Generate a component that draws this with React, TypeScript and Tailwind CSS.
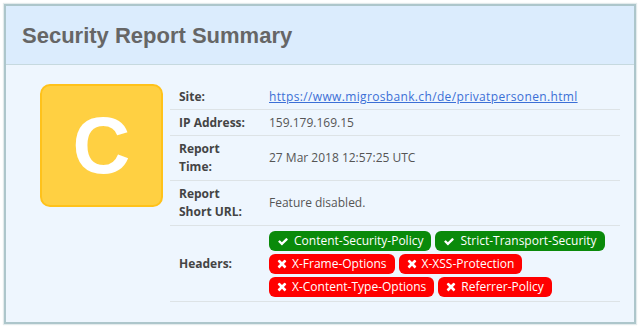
import React from "react";

const Check = () => (
  <svg width="12" height="11" viewBox="0 0 1792 1792" className="shrink-0" fill="currentColor">
    <path d="M1671 566q0 40-28 68l-724 724-136 136q-28 28-68 28t-68-28l-136-136-362-362q-28-28-28-68t28-68l136-136q28-28 68-28t68 28l294 295 656-657q28-28 68-28t68 28l136 136q28 28 28 68z" />
  </svg>
);

const Cross = () => (
  <svg width="10" height="10" viewBox="0 0 1408 1408" className="shrink-0" fill="currentColor">
    <path d="M1298 1054q0 40-28 68l-136 136q-28 28-68 28t-68-28l-294-294-294 294q-28 28-68 28t-68-28l-136-136q-28-28-28-68t28-68l294-294-294-294q-28-28-28-68t28-68l136-136q28-28 68-28t68 28l294 294 294-294q28-28 68-28t68 28l136 136q28 28 28 68t-28 68l-294 294 294 294q28 28 28 68z" />
  </svg>
);

const Pill = ({ ok, label }: { ok: boolean; label: string }) => (
  <span
    className={`inline-flex items-center gap-[5px] h-[20px] rounded-[6px] px-[8px] text-[12px] text-white leading-none ${
      ok ? "bg-[#0a8a0a]" : "bg-[#ff0000]"
    }`}
  >
    {ok ? <Check /> : <Cross />}
    <span>{label}</span>
  </span>
);

const Row = ({ label, children, pad }: { label: React.ReactNode; children: React.ReactNode; pad: string }) => (
  <tr className="border-b border-[#dde3e6]">
    <td className={`w-[99px] pl-[9px] pr-0 ${pad} font-bold text-[#444] align-middle leading-[18px]`}>{label}</td>
    <td className={`${pad} text-[#555] align-middle leading-[18px]`}>{children}</td>
  </tr>
);

export default function App() {
  return (
    <div className="w-[640px] h-[327px] bg-white pt-[4px] pl-[4px]" style={{ fontFamily: '"Open Sans", "Noto Sans", sans-serif' }}>
      <div className="w-[632px] h-[320px] border-2 border-[#adc6cb] bg-[#eef6fe] shadow-[0_0_1px_1px_#e3ebec] flex flex-col">
        <div className="h-[59px] bg-[#dbecfd] border-b border-[#c6d9df] flex items-center pl-[16px] pt-[1px]">
          <h1 className="text-[22px] font-bold text-[#666]" style={{ fontFamily: '"Liberation Sans", Arial, sans-serif' }}>
            Security Report Summary
          </h1>
        </div>
        <div className="flex pl-[34px] pt-[19px] pr-[14px]">
          <div className="w-[123px] h-[123px] shrink-0 rounded-[10px] bg-[#ffd042] border-2 border-[#ffc21a] flex items-center justify-center">
            <span className="text-white font-bold text-[80px] leading-none" style={{ fontFamily: '"Liberation Sans", Arial, sans-serif' }}>
              C
            </span>
          </div>
          <table className="ml-[7px] flex-1 text-[12px] border-collapse -mt-[1px]">
            <tbody>
              <Row label="Site:" pad="pt-[5px] pb-[3px]">
                <a className="text-[#3b6fd6] underline tracking-[0.35px]">https://www.migrosbank.ch/de/privatpersonen.html</a>
              </Row>
              <Row label="IP Address:" pad="pt-[4px] pb-[3px]">159.179.169.15</Row>
              <Row label={<>Report<br />Time:</>} pad="pt-[4px] pb-[4px]">27 Mar 2018 12:57:25 UTC</Row>
              <Row label={<>Report<br />Short URL:</>} pad="pt-[4px] pb-[4px]">Feature disabled.</Row>
              <tr className="border-b border-[#dde3e6]">
                <td className="w-[99px] pl-[9px] font-bold text-[#444] align-middle">Headers:</td>
                <td className="pt-[5px] pb-[4px]">
                  <div className="flex flex-col gap-[3px]">
                    <div className="flex gap-[4px]">
                      <Pill ok label="Content-Security-Policy" />
                      <Pill ok label="Strict-Transport-Security" />
                    </div>
                    <div className="flex gap-[4px]">
                      <Pill ok={false} label="X-Frame-Options" />
                      <Pill ok={false} label="X-XSS-Protection" />
                    </div>
                    <div className="flex gap-[4px]">
                      <Pill ok={false} label="X-Content-Type-Options" />
                      <Pill ok={false} label="Referrer-Policy" />
                    </div>
                  </div>
                </td>
              </tr>
            </tbody>
          </table>
        </div>
      </div>
    </div>
  );
}
